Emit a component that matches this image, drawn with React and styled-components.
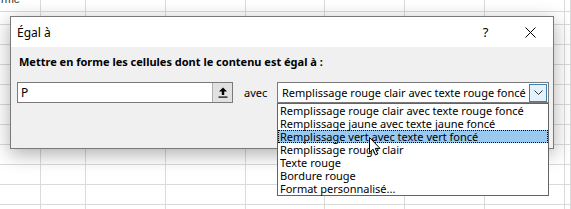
import React from "react";
import styled, { createGlobalStyle } from "styled-components";

const GlobalStyle = createGlobalStyle`
  html, body {
    margin: 0;
    padding: 0;
    overflow: hidden;
    background: #ffffff;
  }
`;

const UI_FONT = `"Segoe UI", "Noto Sans", "Open Sans", sans-serif`;

const Sheet = styled.div`
  position: relative;
  width: 571px;
  height: 209px;
  overflow: hidden;
  display: grid;
  grid-template-columns: 41px 45px 80px 80px 79px 80px 80px 80px 1fr;
  grid-template-rows: 12px 13px repeat(10, 20px);
  background: #ffffff;
`;

const Cell = styled.div`
  box-sizing: border-box;
  border-right: 1px solid #dadada;
  border-bottom: 1px solid #dadada;
  overflow: hidden;
  font-family: "Liberation Sans", Arial, sans-serif;
  font-size: 11px;
  color: #333;
  line-height: 12px;
`;

const CellText = styled.span`
  display: block;
  margin-top: -7px;
  padding-left: 1px;
`;

const Dialog = styled.div`
  position: absolute;
  left: 10px;
  top: 16px;
  width: 544px;
  height: 133px;
  box-sizing: border-box;
  border: 1px solid #7a7a7a;
  background: #f0f0f0;
  box-shadow: 0 5px 18px rgba(0, 0, 0, 0.32);
  display: flex;
  flex-direction: column;
  font-family: ${UI_FONT};
  font-size: 11px;
  color: #000;
`;

const TitleBar = styled.div`
  height: 30px;
  background: #ffffff;
  display: flex;
  align-items: center;
  padding-left: 6px;
`;

const Title = styled.div`
  flex: 1;
  font-size: 12px;
`;

const TitleButton = styled.div`
  width: 45px;
  height: 30px;
  display: flex;
  align-items: center;
  justify-content: center;
  font-size: 13px;
`;

const Body = styled.div`
  flex: 1;
  padding: 7px 0 0 6px;
`;

const Label = styled.div`
  font-weight: 700;
  padding-left: 2px;
  line-height: 16px;
`;

const FieldRow = styled.div`
  margin-top: 12px;
  display: flex;
  align-items: center;
  & > * {
    flex-shrink: 0;
  }
`;

const InputBox = styled.div`
  box-sizing: border-box;
  width: 216px;
  height: 21px;
  border: 1px solid #7a7a7a;
  background: #ffffff;
  display: flex;
  align-items: stretch;
`;

const InputText = styled.div`
  flex: 1;
  padding-left: 3px;
  line-height: 19px;
  font-size: 12px;
`;

const RefButton = styled.div`
  box-sizing: border-box;
  width: 20px;
  height: 19px;
  background: #e1e1e1;
  border-left: 1px solid #adadad;
  display: flex;
  align-items: center;
  justify-content: center;
`;

const Avec = styled.div`
  margin-left: 11px;
  width: 33px;
`;

const SelectWrap = styled.div`
  position: relative;
`;

const Select = styled.div`
  box-sizing: border-box;
  width: 272px;
  height: 21px;
  border: 1px solid #7a7a7a;
  background: #ffffff;
  display: flex;
  align-items: center;
  padding: 0 1px 0 4px;
`;

const SelectText = styled.div`
  flex: 1;
  white-space: nowrap;
`;

const ArrowBox = styled.div`
  box-sizing: border-box;
  width: 18px;
  height: 18px;
  border: 1px solid #3c7fb1;
  background: #e5f1fb;
  display: flex;
  align-items: center;
  justify-content: center;
`;

const ListBox = styled.div`
  position: absolute;
  left: 0;
  top: 21px;
  width: 272px;
  box-sizing: border-box;
  border: 1px solid #646464;
  background: #ffffff;
  z-index: 2;
`;

const Option = styled.div`
  box-sizing: border-box;
  height: 13px;
  line-height: 13px;
  padding-left: 2px;
  white-space: nowrap;
  background: ${(p) => (p.$selected ? "#99c9ef" : "transparent")};
  outline: ${(p) => (p.$selected ? "1px dotted #000" : "none")};
  outline-offset: -1px;
`;

const Cursor = styled.svg`
  position: absolute;
  left: 92px;
  top: 55px;
  z-index: 3;
`;

const options = [
  "Remplissage rouge clair avec texte rouge foncé",
  "Remplissage jaune avec texte jaune foncé",
  "Remplissage vert avec texte vert foncé",
  "Remplissage rouge clair",
  "Texte rouge",
  "Bordure rouge",
  "Format personnalisé...",
];

const ROWS = 12;
const COLS = 9;

export default function App() {
  const cells = [];
  for (let r = 0; r < ROWS; r++) {
    for (let c = 0; c < COLS; c++) {
      cells.push(
        <Cell key={`${r}-${c}`}>
          {r === 0 && c === 0 ? <CellText>rme</CellText> : null}
        </Cell>
      );
    }
  }

  return (
    <>
      <GlobalStyle />
      <Sheet>
        {cells}
        <Dialog>
          <TitleBar>
            <Title>Égal à</Title>
            <TitleButton>?</TitleButton>
            <TitleButton>
              <svg width="11" height="11" viewBox="0 0 11 11">
                <path d="M0.5 0.5 L10.5 10.5 M10.5 0.5 L0.5 10.5" stroke="#000" strokeWidth="1" />
              </svg>
            </TitleButton>
          </TitleBar>
          <Body>
            <Label>Mettre en forme les cellules dont le contenu est égal à :</Label>
            <FieldRow>
              <InputBox>
                <InputText>P</InputText>
                <RefButton>
                  <svg width="10" height="11" viewBox="0 0 10 11">
                    <path d="M5 0.5 L9 4.5 L6.2 4.5 L6.2 8 L3.8 8 L3.8 4.5 L1 4.5 Z" fill="#000" />
                    <rect x="0.5" y="9.5" width="9" height="1.2" fill="#000" />
                  </svg>
                </RefButton>
              </InputBox>
              <Avec>avec</Avec>
              <SelectWrap>
                <Select>
                  <SelectText>Remplissage rouge clair avec texte rouge foncé</SelectText>
                  <ArrowBox>
                    <svg width="9" height="5" viewBox="0 0 9 5">
                      <path d="M0.5 0.5 L4.5 4.5 L8.5 0.5" stroke="#333" strokeWidth="1" fill="none" />
                    </svg>
                  </ArrowBox>
                </Select>
                <ListBox>
                  {options.map((o, i) => (
                    <Option key={o} $selected={i === 2}>
                      {o}
                    </Option>
                  ))}
                </ListBox>
                <Cursor width="12" height="19" viewBox="0 0 12 19">
                  <path
                    d="M0.5 0.5 L0.5 15.5 L4 12.2 L6.5 18 L8.7 17 L6.3 11.4 L11 11.4 Z"
                    fill="#fff"
                    stroke="#000"
                    strokeWidth="1"
                    strokeLinejoin="round"
                  />
                </Cursor>
              </SelectWrap>
            </FieldRow>
          </Body>
        </Dialog>
      </Sheet>
    </>
  );
}
